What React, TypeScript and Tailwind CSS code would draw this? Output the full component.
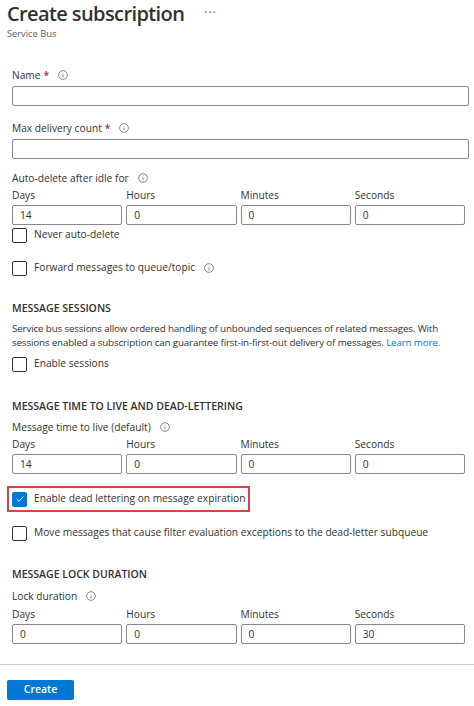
import React from 'react'

function Info() {
  return (
    <svg viewBox="0 0 12 12" className="w-[10px] h-[10px] text-[#605e5c]" fill="none" stroke="currentColor" strokeWidth="0.9">
      <circle cx="6" cy="6" r="5.2" />
      <line x1="6" y1="5.2" x2="6" y2="8.8" />
      <circle cx="6" cy="3.5" r="0.45" fill="currentColor" stroke="none" />
    </svg>
  )
}

function Label({ text, required, info }: { text: string; required?: boolean; info?: boolean }) {
  return (
    <div className="flex items-center h-[16px] text-[10.2px] leading-[16px]">
      <span>{text}</span>
      {required && <span className="ml-[3px] text-[#a4262c] font-semibold">*</span>}
      {info && <span className="ml-[9px] flex items-center"><Info /></span>}
    </div>
  )
}

function TextBox({ value = '' }: { value?: string }) {
  return (
    <div className="h-[20px] border border-[#8a8886] rounded-[2px] px-[7px] text-[10.2px] leading-[18px]">
      {value}
    </div>
  )
}

function Check({ label, checked, info }: { label: string; checked?: boolean; info?: boolean }) {
  return (
    <div className="flex items-center gap-[7px] h-[18px] text-[10.2px]">
      {checked ? (
        <span className="w-[15px] h-[15px] rounded-[2px] bg-[#0078d4] flex items-center justify-center">
          <svg viewBox="0 0 12 12" className="w-[10px] h-[10px]" fill="none" stroke="white" strokeWidth="1.1">
            <path d="M2.2 6.3l2.6 2.5 5-5.6" />
          </svg>
        </span>
      ) : (
        <span className="w-[15px] h-[15px] rounded-[2px] border border-[#323130]" />
      )}
      <span>{label}</span>
      {info && <span className="ml-[2px] flex items-center"><Info /></span>}
    </div>
  )
}

function Duration({ values }: { values: string[] }) {
  const names = ['Days', 'Hours', 'Minutes', 'Seconds']
  return (
    <div className="grid grid-cols-4 gap-x-[4px] w-[453px]">
      {names.map((n, i) => (
        <div key={n}>
          <div className="h-[16px] text-[10.2px] leading-[16px] mb-[2px]">{n}</div>
          <TextBox value={values[i]} />
        </div>
      ))}
    </div>
  )
}

function Section({ title }: { title: string }) {
  return <div className="text-[10.5px] font-semibold leading-[16px]">{title}</div>
}

export default function App() {
  return (
    <div className="w-[474px] h-[706px] bg-white text-[#323130] font-['Open_Sans',sans-serif] overflow-hidden">
      <div className="px-[7px] pt-[1px]">
        <div className="flex items-center h-[26px]">
          <h1 className="text-[20px] font-semibold leading-[26px] tracking-[-0.6px]">Create subscription</h1>
          <span className="ml-[20px] text-[12px] text-[#605e5c] tracking-[1px] leading-none -mt-[2px]">···</span>
        </div>
        <div className="text-[9.3px] text-[#605e5c] leading-[14px]">Service Bus</div>
      </div>

      <div className="pl-[12px] pr-[5px] mt-[26px]">
        <Label text="Name" required info />
        <div className="mt-[3px]"><TextBox /></div>

        <div className="mt-[14px]"><Label text="Max delivery count" required info /></div>
        <div className="mt-[3px]"><TextBox /></div>

        <div className="mt-[11px]"><Label text="Auto-delete after idle for" info /></div>
        <div className="mt-[1px]"><Duration values={['14', '0', '0', '0']} /></div>
        <div className="mt-[1px]"><Check label="Never auto-delete" /></div>
        <div className="mt-[15px]"><Check label="Forward messages to queue/topic" info /></div>

        <div className="mt-[23px]"><Section title="MESSAGE SESSIONS" /></div>
        <p className="mt-[6px] text-[9.8px] tracking-[-0.15px] leading-[14px] w-[440px]">
          Service bus sessions allow ordered handling of unbounded sequences of related messages. With sessions enabled a subscription can guarantee first-in-first-out delivery of messages.{' '}
          <span className="text-[#0078d4]">Learn more.</span>
        </p>
        <div className="mt-[5px]"><Check label="Enable sessions" /></div>

        <div className="mt-[25px]"><Section title="MESSAGE TIME TO LIVE AND DEAD-LETTERING" /></div>
        <div className="mt-[5px]"><Label text="Message time to live (default)" info /></div>
        <div className="mt-[1px]"><Duration values={['14', '0', '0', '0']} /></div>

        <div className="mt-[12px] -ml-[5px] w-[243px] border-2 border-[#e0403f] pl-[3px] py-[2px]">
          <Check label="Enable dead lettering on message expiration" checked />
        </div>
        <div className="mt-[12px]"><Check label="Move messages that cause filter evaluation exceptions to the dead-letter subqueue" /></div>

        <div className="mt-[24px]"><Section title="MESSAGE LOCK DURATION" /></div>
        <div className="mt-[6px]"><Label text="Lock duration" info /></div>
        <div className="mt-[2px]"><Duration values={['0', '0', '0', '30']} /></div>
      </div>

      <div className="mt-[20px] border-t border-[#d2d0ce]" />
      <div className="px-[7px] mt-[15px]">
        <button className="block w-[67px] h-[20px] bg-[#0078d4] text-white text-[10.5px] font-semibold rounded-[2px]">Create</button>
      </div>
    </div>
  )
}
